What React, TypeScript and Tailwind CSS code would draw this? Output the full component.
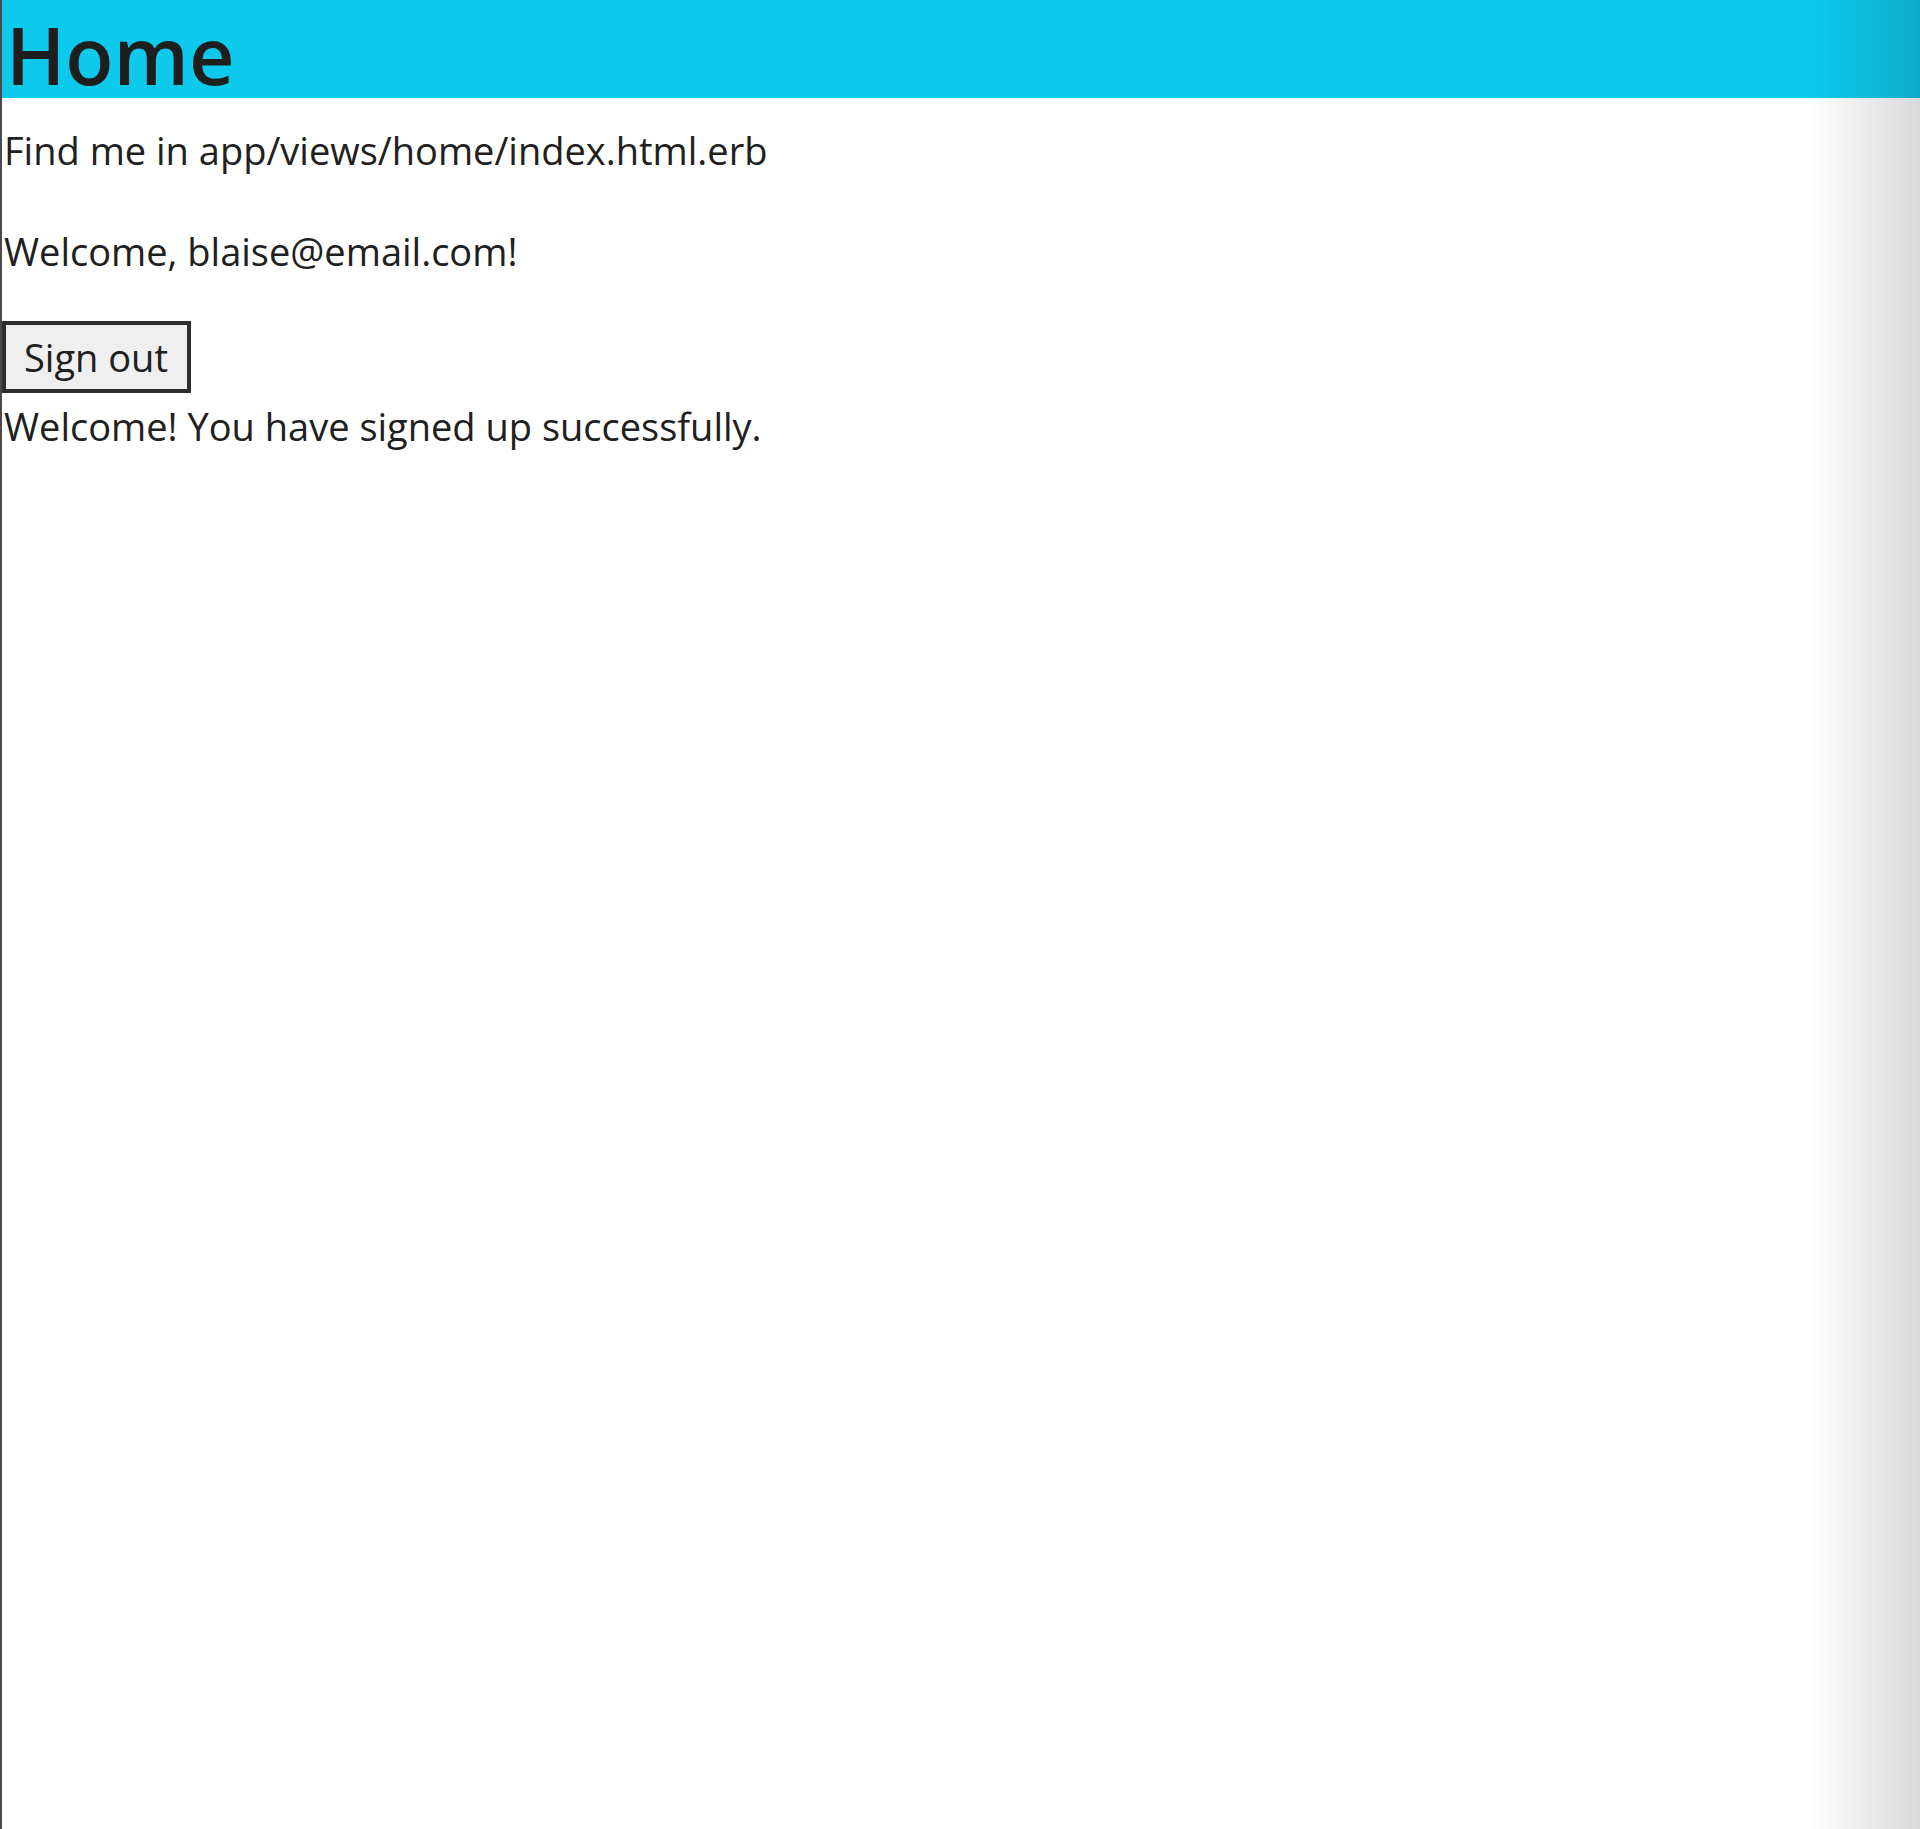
import React from 'react'

const App = () => {
  return (
    <div className="relative min-h-screen bg-white border-l-2 border-[#4a4a4a] font-['Open_Sans','Noto_Sans',sans-serif] text-[#202020] overflow-hidden">
      {/* Header */}
      <header className="h-[98px] bg-[#0dcaed]">
        <h1 className="pl-1 pt-[15px] text-[79px] font-semibold leading-none text-[#1e1e1e]">Home</h1>
      </header>

      {/* Content */}
      <main className="flex flex-col items-start text-[38px] leading-[50px]">
        <p className="mt-[27px] pl-[2px]">Find me in app/views/home/index.html.erb</p>
        <p className="mt-[51px] pl-[2px]">Welcome, blaise@email.com!</p>
        <button className="mt-[45px] h-[72px] w-[189px] border-4 border-[#2e2e2e] bg-[#efefef] pl-[18px] text-left leading-[50px]">
          Sign out
        </button>
        <p className="mt-[8px] pl-[2px]">Welcome! You have signed up successfully.</p>
      </main>

      {/* window shadow on the right edge */}
      <div className="pointer-events-none absolute inset-y-0 right-0 w-[110px] bg-linear-to-r from-transparent to-black/15" />
    </div>
  )
}

export default App
